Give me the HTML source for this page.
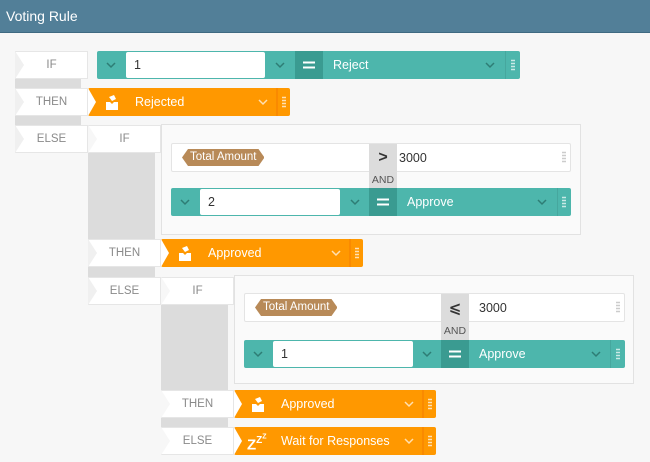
<!DOCTYPE html>
<html><head><meta charset="utf-8"><style>
*{box-sizing:border-box;margin:0;padding:0}
body{width:650px;height:462px;background:#f7f7f7;font-family:"Liberation Sans",sans-serif;position:relative;overflow:hidden}
.hdr{position:absolute;left:0;top:0;width:650px;height:33px;background:#527f98;border-bottom:1px solid #3f6a82;color:#fff;font-size:14px;line-height:32px;padding-left:6px}
.a{position:absolute}
.lbl{position:absolute;height:28px;background:#fff;border:1px solid #e6e6e6;color:#8a8a8a;font-size:11.5px;line-height:26px;text-align:center}
.lbl:before{content:"";position:absolute;left:-1px;top:-1px;width:0;height:0;border-top:14px solid transparent;border-bottom:14px solid transparent;border-left:9px solid #f7f7f7}
.lbl.n:before{border-left-color:#f0f0f0}
.gray{position:absolute;background:#dcdcdc}
.box{position:absolute;background:#fafafa;border:1px solid #e2e2e2}
.teal{position:absolute;height:28px;background:#4db6ac;border-radius:2px}
.teal .s{position:absolute;top:0;height:28px}
.inp{position:absolute;top:1px;height:26px;background:#fff;font-size:12.5px;color:#333;line-height:26px;padding-left:8px;border-radius:2px}
.eq{background:#3a9b91}
.tt{color:#fff;font-size:12.5px;line-height:28px;padding-left:10px}
.org{position:absolute;height:28px;background:#ff9800;border-radius:2px;color:#fff;font-size:12.5px;line-height:28px}
.org:before{content:"";position:absolute;left:0;top:0;border-top:14px solid transparent;border-bottom:14px solid transparent;border-left:8px solid #fff}
.cond{position:absolute;height:29px;background:#fff;border:1px solid #e4e4e4;border-radius:2px}
.tag{position:absolute;top:5px;height:17px;background:#b88a58;color:#fff;font-size:11.5px;line-height:17px;padding:0 8px;clip-path:polygon(6px 0,calc(100% - 6px) 0,100% 50%,calc(100% - 6px) 100%,6px 100%,0 50%)}
.op{position:absolute;background:#dcdcdc;color:#333;text-align:center;font-size:16px;line-height:28px;font-weight:bold}
.and{position:absolute;font-size:10.5px;color:#555;text-align:center}
.grip{position:absolute;width:4px;height:12px;background-image:radial-gradient(circle,rgba(255,255,255,.7) 0.8px,transparent 1px);background-size:2px 3px}
.grip.d{background-image:radial-gradient(circle,#ccc 0.8px,transparent 1px)}
.gl{position:absolute;top:0;height:28px;border-left:1px solid rgba(0,0,0,.08)}
</style></head><body>
<div class="hdr">Voting Rule</div>

<div class="lbl n" style="left:15px;top:51px;width:73px">IF</div>
<div class="gray" style="left:15px;top:79px;width:66px;height:9px"></div>
<div class="teal" style="left:97px;top:51px;width:423px">
 <div class="inp" style="left:29px;width:139px">1</div>
 <div class="s eq" style="left:198px;width:28px"></div>
 <div class="s tt" style="left:226px;width:182px">Reject</div>
 <div class="gl" style="left:408px;width:15px"></div>
</div>
<div class="lbl n" style="left:15px;top:88px;width:73px">THEN</div>
<div class="org" style="left:88px;top:88px;width:202px"><span class="a" style="left:47px">Rejected</span></div>
<div class="gray" style="left:15px;top:116px;width:66px;height:9px"></div>

<div class="lbl n" style="left:15px;top:125px;width:73px">ELSE</div>
<div class="lbl" style="left:88px;top:125px;width:73px">IF</div>
<div class="gray" style="left:88px;top:153px;width:67px;height:86px"></div>
<div class="box" style="left:161px;top:124px;width:420px;height:111px"></div>
<div class="cond" style="left:171px;top:143px;width:400px"><div class="tag" style="left:10px">Total Amount</div><span class="a" style="left:227px;top:0;font-size:12.5px;line-height:28px;color:#333">3000</span></div>
<div class="op" style="left:369px;top:144px;width:28px;height:44px">&gt;</div>
<div class="and" style="left:369px;top:174px;width:28px">AND</div>
<div class="teal" style="left:171px;top:188px;width:400px">
 <div class="inp" style="left:29px;width:140px">2</div>
 <div class="s eq" style="left:198px;width:28px"></div>
 <div class="s tt" style="left:226px;width:160px">Approve</div>
 <div class="gl" style="left:386px;width:14px"></div>
</div>
<div class="lbl n" style="left:88px;top:239px;width:73px">THEN</div>
<div class="org" style="left:161px;top:239px;width:202px"><span class="a" style="left:47px">Approved</span></div>
<div class="gray" style="left:88px;top:267px;width:67px;height:10px"></div>

<div class="lbl n" style="left:88px;top:277px;width:73px">ELSE</div>
<div class="lbl" style="left:161px;top:277px;width:73px">IF</div>
<div class="gray" style="left:161px;top:305px;width:67px;height:85px"></div>
<div class="box" style="left:234px;top:275px;width:400px;height:109px"></div>
<div class="cond" style="left:244px;top:293px;width:381px"><div class="tag" style="left:10px">Total Amount</div><span class="a" style="left:234px;top:0;font-size:12.5px;line-height:28px;color:#333">3000</span></div>
<div class="op" style="left:441px;top:294px;width:28px;height:46px;font-size:15px;font-family:'DejaVu Sans',sans-serif">&#10877;</div>
<div class="and" style="left:441px;top:325px;width:28px">AND</div>
<div class="teal" style="left:244px;top:340px;width:381px">
 <div class="inp" style="left:29px;width:140px">1</div>
 <div class="s eq" style="left:197px;width:28px"></div>
 <div class="s tt" style="left:225px;width:141px">Approve</div>
 <div class="gl" style="left:366px;width:15px"></div>
</div>
<div class="lbl" style="left:161px;top:390px;width:73px">THEN</div>
<div class="org" style="left:234px;top:390px;width:202px"><span class="a" style="left:47px">Approved</span></div>
<div class="gray" style="left:161px;top:418px;width:67px;height:9px"></div>
<div class="lbl" style="left:161px;top:427px;width:73px">ELSE</div>
<div class="org" style="left:234px;top:427px;width:202px"><span class="a" style="left:47px">Wait for Responses</span><span class="a" style="left:13px;top:-3px;font-weight:bold;font-size:15px">Z<sup style="font-size:10px">Z<sup style="font-size:7px">Z</sup></sup></span></div>

<svg class="a" style="left:0;top:0" width="650" height="462">
<defs>
<g id="ch"><path d="M-4,-2 L0,2 L4,-2" fill="none" stroke-width="1.5"/></g>
<g id="bal"><path d="M-6,-1 h4 l2,2 l2,-2 h4 v8 h-12z" fill="#fff"/><path d="M-3,-6 l5,-2 l2,4 l-4,2z" fill="#fff"/></g>
</defs>
<g stroke="#2e7d75">
<use href="#ch" x="111" y="65"/><use href="#ch" x="280" y="65"/><use href="#ch" x="490" y="65"/>
<use href="#ch" x="185" y="202"/><use href="#ch" x="355" y="202"/><use href="#ch" x="542" y="202"/>
<use href="#ch" x="258" y="354"/><use href="#ch" x="427" y="354"/><use href="#ch" x="596" y="354"/>
</g>
<g stroke="#fff" stroke-width="2">
<path d="M303,62.5h12M303,67.5h12"/><path d="M377,199.5h12M377,204.5h12"/><path d="M449,351.5h12M449,356.5h12"/>
</g>
<g stroke="#ffe0b2"><use href="#ch" x="263" y="102"/><use href="#ch" x="336" y="253"/><use href="#ch" x="409" y="404"/><use href="#ch" x="409" y="441"/></g>
<g><use href="#bal" x="112" y="103"/><use href="#bal" x="185" y="254"/><use href="#bal" x="258" y="405"/></g>
<g stroke="#f57c00"><path d="M277,88v28M350,239v28M423,390v28M423,427v28"/></g>
</svg>
<div class="grip" style="left:511px;top:59px"></div>
<div class="grip" style="left:282px;top:96px"></div>
<div class="grip d" style="left:562px;top:151px"></div>
<div class="grip" style="left:562px;top:196px"></div>
<div class="grip" style="left:355px;top:247px"></div>
<div class="grip d" style="left:616px;top:301px"></div>
<div class="grip" style="left:616px;top:348px"></div>
<div class="grip" style="left:428px;top:398px"></div>
<div class="grip" style="left:428px;top:435px"></div>
</body></html>
